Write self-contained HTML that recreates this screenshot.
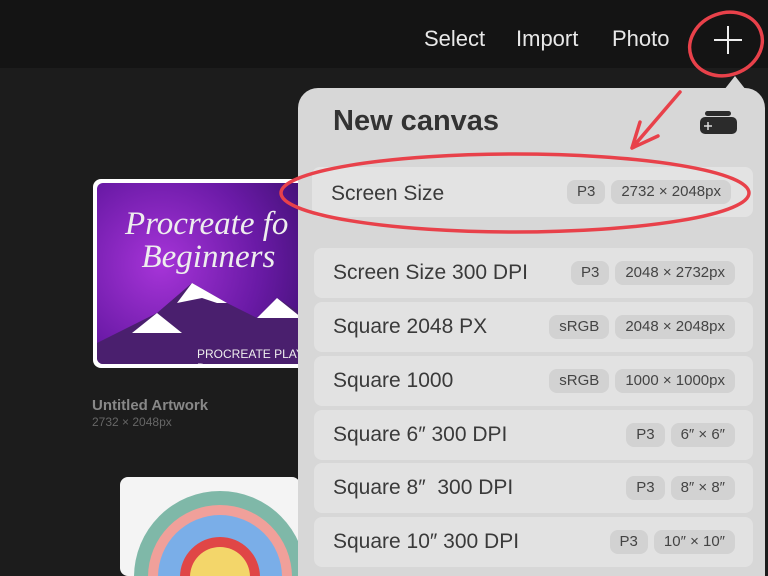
<!DOCTYPE html>
<html style="overflow:hidden"><head><style>
*{margin:0;padding:0;box-sizing:border-box}
html,body{width:768px;height:576px;overflow:hidden}
body{background:#1c1c1c;font-family:"Liberation Sans",sans-serif;position:relative}
.top{position:absolute;left:0;top:0;width:768px;height:68px;background:#141414}
.nav{position:absolute;top:26px;color:#e8e8e8;font-size:22px}
.panel{position:absolute;left:298px;top:88px;width:467px;height:488px;background:#d7d7d7;border-radius:20px 20px 0 0}
.title{position:absolute;left:333px;top:105px;font-size:29px;font-weight:bold;color:#333}
.row{position:absolute;left:314px;width:439px;height:50px;background:#e2e2e2;border-radius:8px}
.row .n{position:absolute;left:19px;top:13px;font-size:21px;color:#3a3a3a}
.chips{position:absolute;right:18px;top:13px;display:flex;gap:6px}
.c{background:#d2d2d2;border-radius:8px;height:24px;line-height:24px;padding:0 10px;font-size:15px;color:#444}
.card{position:absolute;border-radius:8px;overflow:hidden}
</style></head><body>
<div class="top"></div>
<div class="nav" style="left:424px">Select</div>
<div class="nav" style="left:516px">Import</div>
<div class="nav" style="left:612px">Photo</div>
<svg style="position:absolute;left:713px;top:25px" width="30" height="30"><path d="M15 1V29M1 15H29" stroke="#eee" stroke-width="2"/></svg>

<div class="card" style="left:93px;top:179px;width:220px;height:189px;background:#fff;padding:4px">
<div style="width:100%;height:100%;border-radius:6px;background:radial-gradient(circle at 30% 45%,#a634d8,#6a1aa6 55%,#3a0f6c);position:relative;overflow:hidden">
<div style="position:absolute;left:28px;top:25px;color:#eee;font-family:'Liberation Serif',serif;font-style:italic;font-size:33px;line-height:33px">Procreate fo<br>&nbsp;&nbsp;Beginners</div>
<svg style="position:absolute;left:0;top:90px" width="212" height="91"><polygon points="0,95 0,70 60,40 95,10 130,30 160,45 180,25 220,50 220,95" fill="#4a1f6e"/><polygon points="95,10 80,30 105,25 120,30 130,30" fill="#fff"/><polygon points="160,45 180,25 205,45" fill="#fff"/><polygon points="35,60 60,40 85,60" fill="#fff"/></svg>
<div style="position:absolute;left:100px;top:164px;color:#eee;font-size:12px">PROCREATE PLAY D</div>
</div></div>
<div style="position:absolute;left:92px;top:397px;color:#888;font-size:15px;font-weight:bold">Untitled Artwork</div>
<div style="position:absolute;left:92px;top:415px;color:#666;font-size:12px">2732 × 2048px</div>
<svg style="position:absolute;left:120px;top:477px" width="180" height="99">
<rect x="0" y="0" width="180" height="99" rx="8" fill="#f4f4f4"/>
<circle cx="100" cy="100" r="86" fill="#7fb8a8"/>
<circle cx="100" cy="100" r="72" fill="#f0a09a"/>
<circle cx="100" cy="100" r="62" fill="#7aaee8"/>
<circle cx="100" cy="100" r="40" fill="#e04646"/>
<circle cx="100" cy="100" r="30" fill="#f3d66a"/>
</svg>

<div class="panel"></div>
<svg style="position:absolute;left:720px;top:72px" width="30" height="18"><polygon points="4,18 15,4 26,18" fill="#d7d7d7"/></svg>
<div class="title">New canvas</div>
<svg style="position:absolute;left:700px;top:110px" width="38" height="25"><rect x="5" y="1" width="26" height="5" rx="2.5" fill="#2b2b2b"/><rect x="0" y="7" width="37" height="17" rx="5" fill="#2b2b2b"/><path d="M4 16H12M8 12V20" stroke="#ddd" stroke-width="1.5"/></svg>

<div class="row" style="left:312px;top:167px;width:441px;background:#e3e3e3"><div class="n" style="top:15px">Screen Size</div><div class="chips" style="right:22px"><div class="c">P3</div><div class="c">2732 × 2048px</div></div></div>
<div class="row" style="top:248px"><div class="n">Screen Size 300 DPI</div><div class="chips"><div class="c">P3</div><div class="c">2048 × 2732px</div></div></div>
<div class="row" style="top:302px"><div class="n">Square 2048 PX</div><div class="chips"><div class="c">sRGB</div><div class="c">2048 × 2048px</div></div></div>
<div class="row" style="top:356px"><div class="n">Square 1000</div><div class="chips"><div class="c">sRGB</div><div class="c">1000 × 1000px</div></div></div>
<div class="row" style="top:410px"><div class="n">Square 6″ 300 DPI</div><div class="chips"><div class="c">P3</div><div class="c">6″ × 6″</div></div></div>
<div class="row" style="top:463px"><div class="n">Square 8″&nbsp; 300 DPI</div><div class="chips"><div class="c">P3</div><div class="c">8″ × 8″</div></div></div>
<div class="row" style="top:517px"><div class="n">Square 10″ 300 DPI</div><div class="chips"><div class="c">P3</div><div class="c">10″ × 10″</div></div></div>

<svg style="position:absolute;left:0;top:0" width="768" height="576" fill="none" stroke="#e8414a" stroke-width="3.5" stroke-linecap="round">
<ellipse cx="515" cy="193" rx="234" ry="39"/>
<ellipse cx="726" cy="44" rx="37" ry="31" transform="rotate(-20 726 44)"/>
<path d="M680 92L632 148M632 148L640 122M632 148L658 136"/>
</svg>
</body></html>
